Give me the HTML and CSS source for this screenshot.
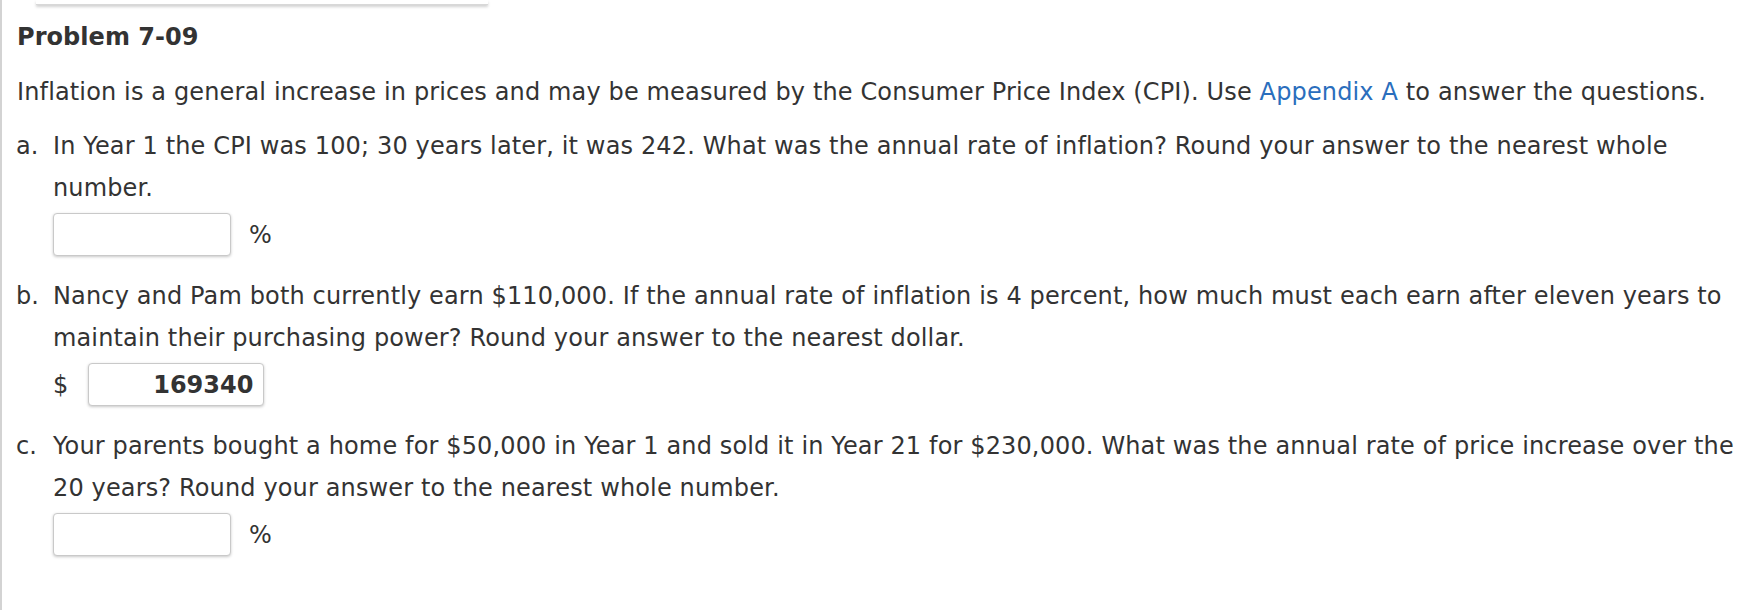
FILE: index.html
```html
<!DOCTYPE html>
<html>
<head>
<meta charset="utf-8">
<link rel="stylesheet" href="styles.css">
</head>
<body>
<div class="frame">
  <div class="topbar"></div>
  <h2 class="title">Problem 7-09</h2>
  <p class="intro">Inflation is a general increase in prices and may be measured by the Consumer Price Index (CPI). Use <a class="link" href="#">Appendix A</a> to answer the questions.</p>
  <div class="parts">
    <div class="part">
      <span class="label">a.</span>
      <div class="body">
        <p class="question">In Year 1 the CPI was 100; 30 years later, it was 242. What was the annual rate of inflation? Round your answer to the nearest whole number.</p>
        <div class="answer">
          <input class="field" type="text" value="">
          <span class="unit">%</span>
        </div>
      </div>
    </div>
    <div class="part">
      <span class="label">b.</span>
      <div class="body">
        <p class="question">Nancy and Pam both currently earn $110,000. If the annual rate of inflation is 4 percent, how much must each earn after eleven years to maintain their purchasing power? Round your answer to the nearest dollar.</p>
        <div class="answer">
          <span class="unit pre">$</span>
          <input class="field filled" type="text" value="169340">
        </div>
      </div>
    </div>
    <div class="part">
      <span class="label">c.</span>
      <div class="body">
        <p class="question">Your parents bought a home for $50,000 in Year 1 and sold it in Year 21 for $230,000. What was the annual rate of price increase over the 20 years? Round your answer to the nearest whole number.</p>
        <div class="answer">
          <input class="field" type="text" value="">
          <span class="unit">%</span>
        </div>
      </div>
    </div>
  </div>
</div>
</body>
</html>
```

FILE: styles.css
```css
html, body {
  margin: 0;
  padding: 0;
  background: #ffffff;
}
body {
  font-family: "DejaVu Sans", Verdana, sans-serif;
  color: #333333;
  overflow: hidden;
}
.frame {
  border-left: 2px solid #d3d3d3;
  height: 610px;
  box-sizing: border-box;
  padding-left: 15px;
  padding-right: 14px;
}
.topbar {
  width: 452px;
  height: 4px;
  margin-left: 19px;
  background: #ffffff;
  border-bottom: 1px solid #d8d8d8;
  box-shadow: 0 2px 3px rgba(0,0,0,0.18);
}
.title {
  margin: 17px 0 0 0;
  font-size: 24px;
  line-height: 30px;
  font-weight: bold;
  letter-spacing: 0.05px;
}
.intro {
  margin: 19px 0 0 0;
  font-size: 24px;
  line-height: 42px;
  letter-spacing: 0.14px;
}
.link {
  color: #2a6ebd;
  text-decoration: none;
}
.parts {
  display: flex;
  flex-direction: column;
  gap: 19px;
  margin-top: 12px;
}
.part {
  display: flex;
  font-size: 24px;
  line-height: 42px;
  letter-spacing: 0.14px;
}
.label {
  width: 37px;
  flex: none;
  margin-left: -1px;
}
.body {
  flex: 1;
}
.question {
  margin: 0;
}
.answer {
  display: flex;
  align-items: center;
  gap: 18px;
  margin-top: 4px;
}
.field {
  width: 178px;
  height: 43px;
  box-sizing: border-box;
  border: 1px solid #c9c9c9;
  border-radius: 4px;
  box-shadow: 0 1px 3px rgba(0,0,0,0.22);
  font-family: "DejaVu Sans", Verdana, sans-serif;
  font-size: 24px;
  font-weight: bold;
  color: #333333;
  text-align: right;
  padding: 0 10px;
  outline: none;
  margin: 0;
}
.filled {
  width: 176px;
}
.unit {
  font-size: 24px;
}
.pre {
  margin-right: 2px;
}
```
